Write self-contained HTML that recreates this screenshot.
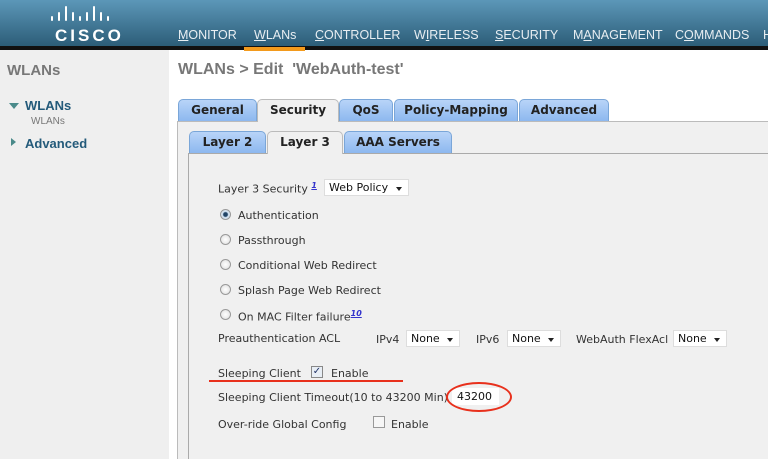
<!DOCTYPE html>
<html style="overflow:hidden;height:459px"><head><style>
*{margin:0;padding:0;box-sizing:border-box}
body{width:768px;height:459px;overflow:hidden;background:#fff;font-family:"DejaVu Sans",Verdana,sans-serif;position:relative}
.hdr{position:absolute;left:0;top:0;width:768px;height:46px;background:linear-gradient(#5c97b8,#2c5d78)}
.blk{position:absolute;left:0;top:46px;width:768px;height:4px;background:#111}
.nav{position:absolute;top:28px;font:12.5px "Liberation Sans",Arial,sans-serif;color:#e8eef2}
.nav u{text-decoration:underline}
.logo{position:absolute;left:55px;top:26px;font:bold 17px "Liberation Sans",Arial,sans-serif;color:#fff;letter-spacing:3px}
.bar{position:absolute;background:#fff;width:2px;border-radius:1px}
.side{position:absolute;left:0;top:50px;width:169px;height:409px;background:#efefef}
.a{position:absolute;font-family:"Liberation Sans",Arial,sans-serif}
.tab{position:absolute;height:22px;border:1px solid #7aa6d8;border-bottom:none;border-radius:5px 5px 0 0;background:linear-gradient(#b8d4f8,#8db8ef);font:bold 12px "DejaVu Sans",Verdana,sans-serif;color:#222;text-align:center;line-height:21px}
.tab.on{background:#f0f0f0;border-color:#bbb;height:23px}
.t{position:absolute;font-size:11px;color:#333;white-space:nowrap}
.sel{position:absolute;background:#fff;border:1px solid #ddd;font-size:11px;color:#111;height:17px;line-height:15px;padding-left:4px}
.sel:after{content:"";position:absolute;right:6px;top:7px;border:3.5px solid transparent;border-top:4px solid #222}
.rad{position:absolute;width:11px;height:11px;border-radius:50%;border:1px solid #999;background:radial-gradient(#fff,#ddd)}
</style></head><body>
<div class="hdr"></div><div class="blk"></div>
<div style="position:absolute;left:244px;top:47px;width:61px;height:4px;background:#f39a1c"></div>
<div class="bar" style="left:51px;top:16px;height:5px"></div>
<div class="bar" style="left:58px;top:12px;height:9px"></div>
<div class="bar" style="left:65px;top:6px;height:15px"></div>
<div class="bar" style="left:72px;top:12px;height:9px"></div>
<div class="bar" style="left:79px;top:16px;height:5px"></div>
<div class="bar" style="left:86px;top:12px;height:9px"></div>
<div class="bar" style="left:93px;top:6px;height:15px"></div>
<div class="bar" style="left:100px;top:12px;height:9px"></div>
<div class="bar" style="left:107px;top:16px;height:5px"></div>
<div class="logo">CISCO</div>
<div class="nav" style="left:178px"><u>M</u>ONITOR</div>
<div class="nav" style="left:254px"><u>W</u>LANs</div>
<div class="nav" style="left:315px"><u>C</u>ONTROLLER</div>
<div class="nav" style="left:414px">W<u>I</u>RELESS</div>
<div class="nav" style="left:495px"><u>S</u>ECURITY</div>
<div class="nav" style="left:573px">M<u>A</u>NAGEMENT</div>
<div class="nav" style="left:675px">C<u>O</u>MMANDS</div>
<div class="nav" style="left:763px">H</div>
<div class="side"></div>
<div class="a" style="left:7px;top:62px;font-size:15px;font-weight:bold;color:#777">WLANs</div>
<div style="position:absolute;left:9px;top:103px;border:5px solid transparent;border-top:6px solid #4a8a8a"></div>
<div class="a" style="left:25px;top:98px;font-size:13px;font-weight:bold;color:#235a7a">WLANs</div>
<div class="a" style="left:31px;top:116px;font-size:10px;color:#777">WLANs</div>
<div style="position:absolute;left:11px;top:138px;border:4px solid transparent;border-left:5px solid #4a8a8a"></div>
<div class="a" style="left:25px;top:136px;font-size:13px;font-weight:bold;color:#235a7a">Advanced</div>
<div class="a" style="left:178px;top:61px;font-size:16px;font-weight:bold;color:#777">WLANs &gt; Edit &nbsp;'WebAuth-test'</div>
<div style="position:absolute;left:177px;top:121px;width:591px;height:338px;background:#f0f0f0;border:1px solid #bbb;border-right:none;border-bottom:none"></div>
<div class="tab" style="left:178px;top:99px;width:79px">General</div>
<div class="tab on" style="left:257px;top:99px;width:82px">Security</div>
<div class="tab" style="left:339px;top:99px;width:54px">QoS</div>
<div class="tab" style="left:394px;top:99px;width:124px">Policy-Mapping</div>
<div class="tab" style="left:519px;top:99px;width:90px">Advanced</div>
<div style="position:absolute;left:188px;top:153px;width:580px;height:306px;background:#f0f0f0;border:1px solid #aaa;border-right:none;border-bottom:none"></div>
<div class="tab" style="left:189px;top:131px;width:77px">Layer 2</div>
<div class="tab on" style="left:267px;top:131px;width:76px">Layer 3</div>
<div class="tab" style="left:344px;top:131px;width:108px">AAA Servers</div>
<div class="t" style="left:218px;top:181px">Layer 3 Security <sup style="color:#33c;font-weight:bold;font-style:italic;font-size:8px;text-decoration:underline">1</sup></div>
<div class="sel" style="left:324px;top:179px;width:85px">Web Policy</div>
<div class="rad" style="left:220px;top:209px;background:radial-gradient(#246 30%,#cde 45%,#eee)"></div>
<div class="t" style="left:238px;top:209px">Authentication</div>
<div class="rad" style="left:220px;top:234px"></div><div class="t" style="left:238px;top:234px">Passthrough</div>
<div class="rad" style="left:220px;top:259px"></div><div class="t" style="left:238px;top:259px">Conditional Web Redirect</div>
<div class="rad" style="left:220px;top:284px"></div><div class="t" style="left:238px;top:284px">Splash Page Web Redirect</div>
<div class="rad" style="left:220px;top:309px"></div><div class="t" style="left:238px;top:309px">On MAC Filter failure<sup style="color:#33c;font-weight:bold;font-style:italic;font-size:8px;text-decoration:underline">10</sup></div>
<div class="t" style="left:218px;top:332px">Preauthentication ACL</div>
<div class="t" style="left:376px;top:333px">IPv4</div><div class="sel" style="left:406px;top:330px;width:54px">None</div>
<div class="t" style="left:476px;top:333px">IPv6</div><div class="sel" style="left:507px;top:330px;width:54px">None</div>
<div class="t" style="left:576px;top:333px">WebAuth FlexAcl</div><div class="sel" style="left:673px;top:330px;width:54px">None</div>
<div class="t" style="left:218px;top:367px">Sleeping Client</div>
<div style="position:absolute;left:311px;top:366px;width:12px;height:12px;border:1px solid #888;background:#e8eef5;font-size:10px;line-height:10px;color:#236;text-align:center">✓</div>
<div class="t" style="left:331px;top:367px">Enable</div>
<div style="position:absolute;left:209px;top:380px;width:194px;height:2px;background:#e8301c"></div>
<div class="t" style="left:218px;top:391px">Sleeping Client Timeout(10 to 43200 Min)</div>
<div style="position:absolute;left:452px;top:388px;width:47px;height:17px;background:#fff;font-size:11px;line-height:17px;padding-left:5px;color:#111">43200</div>
<div style="position:absolute;left:446px;top:382px;width:66px;height:30px;border:2px solid #e8301c;border-radius:50%"></div>
<div class="t" style="left:218px;top:418px">Over-ride Global Config</div>
<div style="position:absolute;left:373px;top:416px;width:12px;height:12px;border:1px solid #999;background:#f6f6f6"></div>
<div class="t" style="left:391px;top:418px">Enable</div>
</body></html>
